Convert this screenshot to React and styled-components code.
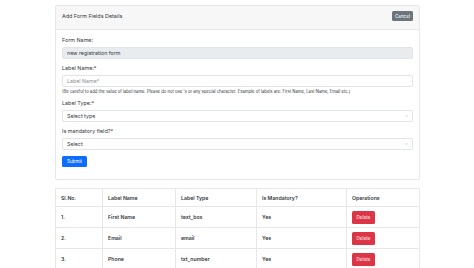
import React from 'react';
import styled, {createGlobalStyle} from 'styled-components';

const GlobalStyle = createGlobalStyle`
  html, body {
    margin: 0;
    padding: 0;
    background: #fff;
  }
  body {
    font-family: Inter, "Liberation Sans", sans-serif;
    color: #33383d;
    -webkit-font-smoothing: antialiased;
  }
`;

const rows = [
  {no: '1.', name: 'First Name', type: 'text_box', mandatory: 'Yes'},
  {no: '2.', name: 'Email', type: 'email', mandatory: 'Yes'},
  {no: '3.', name: 'Phone', type: 'txt_number', mandatory: 'Yes'},
];

const Chevron = () => (
  <ChevronIcon viewBox="0 0 16 16" width="3" height="3">
    <path d="M2 5l6 6 6-6" fill="none" stroke="#9aa0a6" strokeWidth="2" strokeLinecap="round" strokeLinejoin="round" />
  </ChevronIcon>
);

const App = () => {
  return (
    <>
      <GlobalStyle />
      <Page>
        <Card>
          <CardHeader>
            <Title>Add Form Fields Details</Title>
            <Button $variant="secondary" $w={21} $h={10}>Cancel</Button>
          </CardHeader>
          <CardBody>
            <Group>
              <Label>Form Name:</Label>
              <Input $disabled>new registration form</Input>
            </Group>
            <Group $tight>
              <Label>Label Name:*</Label>
              <Input $placeholder>Label Name*</Input>
              <Help>
                (Be careful to add the value of label name. Please do not use 's or any special character. Example of labels are: First Name, Last Name, Email etc.)
              </Help>
            </Group>
            <Group>
              <Label>Label Type:*</Label>
              <Input>
                Select type
                <Chevron />
              </Input>
            </Group>
            <Group $last>
              <Label>Is mandatory field?*</Label>
              <Input>
                Select
                <Chevron />
              </Input>
            </Group>
            <Button $variant="primary" $w={25} $h={11}>Submit</Button>
          </CardBody>
        </Card>

        <Table>
          <colgroup>
            <col style={{width: 47}} />
            <col style={{width: 73}} />
            <col style={{width: 81}} />
            <col style={{width: 90}} />
            <col />
          </colgroup>
          <thead>
            <tr>
              <Th>Sl.No.</Th>
              <Th>Label Name</Th>
              <Th>Label Type</Th>
              <Th>Is Mandatory?</Th>
              <Th>Operations</Th>
            </tr>
          </thead>
          <tbody>
            {rows.map((r) => (
              <tr key={r.no}>
                <Td>{r.no}</Td>
                <Td>{r.name}</Td>
                <Td>{r.type}</Td>
                <Td>{r.mandatory}</Td>
                <Td>
                  <Button $variant="danger" $w={23} $h={13}>Delete</Button>
                </Td>
              </tr>
            ))}
          </tbody>
        </Table>
      </Page>
    </>
  );
};

const Page = styled.div`
  width: 365px;
  margin: 0 0 0 55px;
  padding-top: 5px;
  display: flex;
  flex-direction: column;
  gap: 8px;
`;

const Card = styled.div`
  border: 1px solid #e6e7e8;
  border-radius: 2px;
  background: #fff;
`;

const CardHeader = styled.div`
  height: 24px;
  box-sizing: border-box;
  padding: 5px 6px 0 6px;
  background: #f7f7f7;
  border-bottom: 1px solid #e6e7e8;
  display: flex;
  justify-content: space-between;
  align-items: flex-start;
`;

const Title = styled.div`
  font-size: 5.4px;
  line-height: 10px;
`;

const CardBody = styled.div`
  padding: 6px 6px 12px 6px;
`;

const Group = styled.div`
  margin-bottom: ${(p) => (p.$last ? '6px' : p.$tight ? '4px' : '5px')};
`;

const Label = styled.div`
  font-size: 5.4px;
  line-height: 8px;
  margin-bottom: 3px;
`;

const Input = styled.div`
  position: relative;
  height: 12px;
  box-sizing: border-box;
  border: 1px solid #e2e5e8;
  border-radius: 2px;
  padding: 0 4px;
  display: flex;
  align-items: center;
  font-size: 5.3px;
  background: ${(p) => (p.$disabled ? '#e9ecef' : '#fff')};
  color: ${(p) => (p.$placeholder ? '#8a9095' : '#33383d')};
`;

const ChevronIcon = styled.svg`
  position: absolute;
  right: 4px;
  top: 50%;
  transform: translateY(-50%);
`;

const Help = styled.div`
  font-size: 4.2px;
  line-height: 7px;
  margin-top: 1px;
`;

const colors = {
  primary: '#0d6efd',
  secondary: '#6c757d',
  danger: '#dc3545',
};

const Button = styled.button`
  width: ${(p) => p.$w}px;
  height: ${(p) => p.$h}px;
  padding: 0;
  border: none;
  border-radius: 1.5px;
  background: ${(p) => colors[p.$variant]};
  color: #fff;
  font-family: inherit;
  font-size: 4.6px;
  display: flex;
  align-items: center;
  justify-content: center;
`;

const Table = styled.table`
  width: 365px;
  table-layout: fixed;
  border-collapse: collapse;
  border: 1px solid #e6e7e8;
`;

const Th = styled.th`
  height: 17px;
  padding: 0 0 0 5px;
  text-align: left;
  vertical-align: middle;
  font-size: 5.2px;
  font-weight: 600;
  border: 1px solid #e6e7e8;
`;

const Td = styled.td`
  height: 20px;
  padding: 0 0 0 5px;
  vertical-align: middle;
  font-size: 5.2px;
  font-weight: 600;
  border: 1px solid #e6e7e8;
`;

export default App;
